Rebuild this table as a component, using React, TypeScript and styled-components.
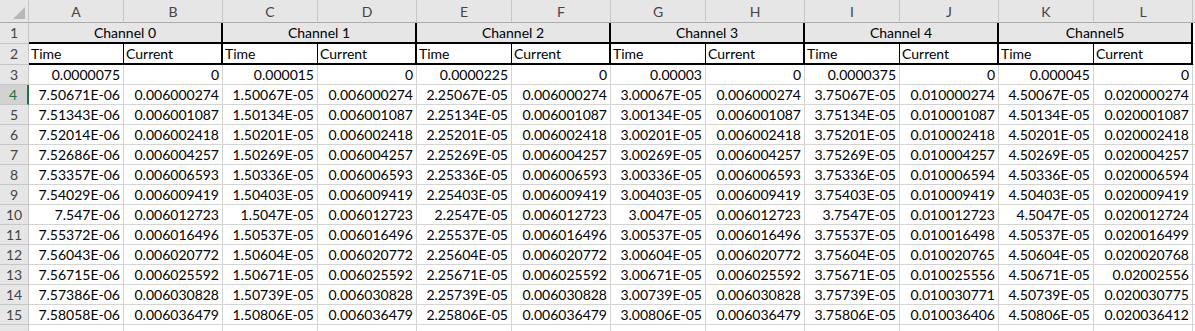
import React from "react";
import styled, { createGlobalStyle } from "styled-components";

const GlobalStyle = createGlobalStyle`
  html, body { margin: 0; padding: 0; background: #ffffff; overflow: hidden; }
  #root { width: 1195px; height: 331px; overflow: hidden; }
`;

const FONT = `Lato, "Open Sans", "Liberation Sans", sans-serif`;
const GRID = "#d4d4d4";
const HEAD_BG = "#e6e6e6";
const HEAD_LINE = "#c6c6c6";

const Sheet = styled.div`
  display: grid;
  grid-template-columns: 29px repeat(6, 95px 99px) 1fr;
  grid-template-rows: 23px 21px 21px repeat(13, 20px) 20px;
  width: 1195px;
  height: 331px;
  overflow: hidden;
  font-family: ${FONT};
  font-size: 14px;
  color: #000;
`;

const Cell = styled.div`
  box-sizing: border-box;
  display: flex;
  align-items: center;
  overflow: hidden;
  white-space: nowrap;
  line-height: 1;
`;

const Corner = styled(Cell)`
  background: ${HEAD_BG};
  border-right: 1px solid ${HEAD_LINE};
  border-bottom: 1px solid #ababab;
  justify-content: flex-end;
  align-items: flex-end;
  padding: 0 3px 3px 0;
`;

const CornerMark = styled.span`
  width: 0;
  height: 0;
  border-left: 12px solid transparent;
  border-bottom: 12px solid #b7b7b7;
`;

const ColHeader = styled(Cell)`
  background: ${HEAD_BG};
  border-right: 1px solid ${HEAD_LINE};
  border-bottom: 1px solid #ababab;
  justify-content: center;
  color: #444;
  padding-top: 1px;
`;

const RowHeader = styled(Cell)<{ $active?: boolean }>`
  background: ${(p) => (p.$active ? "#d2d2d2" : HEAD_BG)};
  color: ${(p) => (p.$active ? "#217346" : "#444")};
  border-right: ${(p) => (p.$active ? "2px solid #217346" : `1px solid ${HEAD_LINE}`)};
  border-bottom: 1px solid ${HEAD_LINE};
  justify-content: center;
  padding-right: ${(p) => (p.$active ? "1px" : "0")};
`;

const Channel = styled(Cell)`
  grid-column: span 2;
  background: #e7e6e6;
  border-right: 2px solid #000;
  border-bottom: 2px solid #000;
  justify-content: center;
  padding-top: 1px;
`;

const Label = styled(Cell)<{ $outer?: boolean }>`
  border-right: ${(p) => (p.$outer ? "2px" : "1px")} solid #000;
  border-bottom: 2px solid #000;
  justify-content: flex-start;
  padding: 1px 0 0 2px;
`;

const Num = styled(Cell)`
  border-right: 1px solid ${GRID};
  border-bottom: 1px solid ${GRID};
  justify-content: flex-end;
  padding: 1px 3px 0 0;
`;

const Filler = styled(Cell)<{ $head?: boolean }>`
  background: ${(p) => (p.$head ? HEAD_BG : "#fff")};
  border-bottom: 1px solid ${(p) => (p.$head ? "#ababab" : GRID)};
`;

const COLS = ["A", "B", "C", "D", "E", "F", "G", "H", "I", "J", "K", "L"];
const CHANNELS = ["Channel 0", "Channel 1", "Channel 2", "Channel 3", "Channel 4", "Channel5"];

const DATA: string[][] = [
  ["0.0000075", "0", "0.000015", "0", "0.0000225", "0", "0.00003", "0", "0.0000375", "0", "0.000045", "0"],
  ["7.50671E-06", "0.006000274", "1.50067E-05", "0.006000274", "2.25067E-05", "0.006000274", "3.00067E-05", "0.006000274", "3.75067E-05", "0.010000274", "4.50067E-05", "0.020000274"],
  ["7.51343E-06", "0.006001087", "1.50134E-05", "0.006001087", "2.25134E-05", "0.006001087", "3.00134E-05", "0.006001087", "3.75134E-05", "0.010001087", "4.50134E-05", "0.020001087"],
  ["7.52014E-06", "0.006002418", "1.50201E-05", "0.006002418", "2.25201E-05", "0.006002418", "3.00201E-05", "0.006002418", "3.75201E-05", "0.010002418", "4.50201E-05", "0.020002418"],
  ["7.52686E-06", "0.006004257", "1.50269E-05", "0.006004257", "2.25269E-05", "0.006004257", "3.00269E-05", "0.006004257", "3.75269E-05", "0.010004257", "4.50269E-05", "0.020004257"],
  ["7.53357E-06", "0.006006593", "1.50336E-05", "0.006006593", "2.25336E-05", "0.006006593", "3.00336E-05", "0.006006593", "3.75336E-05", "0.010006594", "4.50336E-05", "0.020006594"],
  ["7.54029E-06", "0.006009419", "1.50403E-05", "0.006009419", "2.25403E-05", "0.006009419", "3.00403E-05", "0.006009419", "3.75403E-05", "0.010009419", "4.50403E-05", "0.020009419"],
  ["7.547E-06", "0.006012723", "1.5047E-05", "0.006012723", "2.2547E-05", "0.006012723", "3.0047E-05", "0.006012723", "3.7547E-05", "0.010012723", "4.5047E-05", "0.020012724"],
  ["7.55372E-06", "0.006016496", "1.50537E-05", "0.006016496", "2.25537E-05", "0.006016496", "3.00537E-05", "0.006016496", "3.75537E-05", "0.010016498", "4.50537E-05", "0.020016499"],
  ["7.56043E-06", "0.006020772", "1.50604E-05", "0.006020772", "2.25604E-05", "0.006020772", "3.00604E-05", "0.006020772", "3.75604E-05", "0.010020765", "4.50604E-05", "0.020020768"],
  ["7.56715E-06", "0.006025592", "1.50671E-05", "0.006025592", "2.25671E-05", "0.006025592", "3.00671E-05", "0.006025592", "3.75671E-05", "0.010025556", "4.50671E-05", "0.02002556"],
  ["7.57386E-06", "0.006030828", "1.50739E-05", "0.006030828", "2.25739E-05", "0.006030828", "3.00739E-05", "0.006030828", "3.75739E-05", "0.010030771", "4.50739E-05", "0.020030775"],
  ["7.58058E-06", "0.006036479", "1.50806E-05", "0.006036479", "2.25806E-05", "0.006036479", "3.00806E-05", "0.006036479", "3.75806E-05", "0.010036406", "4.50806E-05", "0.020036412"],
];

export default function App() {
  return (
    <>
      <GlobalStyle />
      <Sheet>
        <Corner>
          <CornerMark />
        </Corner>
        {COLS.map((c) => (
          <ColHeader key={c}>{c}</ColHeader>
        ))}
        <Filler $head />

        <RowHeader>1</RowHeader>
        {CHANNELS.map((ch) => (
          <Channel key={ch}>{ch}</Channel>
        ))}
        <Filler />

        <RowHeader>2</RowHeader>
        {CHANNELS.map((ch) => (
          <React.Fragment key={ch}>
            <Label>Time</Label>
            <Label $outer>Current</Label>
          </React.Fragment>
        ))}
        <Filler />

        {DATA.map((row, i) => (
          <React.Fragment key={i}>
            <RowHeader $active={i + 3 === 4}>{i + 3}</RowHeader>
            {row.map((v, j) => (
              <Num key={j}>{v}</Num>
            ))}
            <Filler />
          </React.Fragment>
        ))}

        <RowHeader />
        {COLS.map((c) => (
          <Num key={c} />
        ))}
        <Filler />
      </Sheet>
    </>
  );
}
